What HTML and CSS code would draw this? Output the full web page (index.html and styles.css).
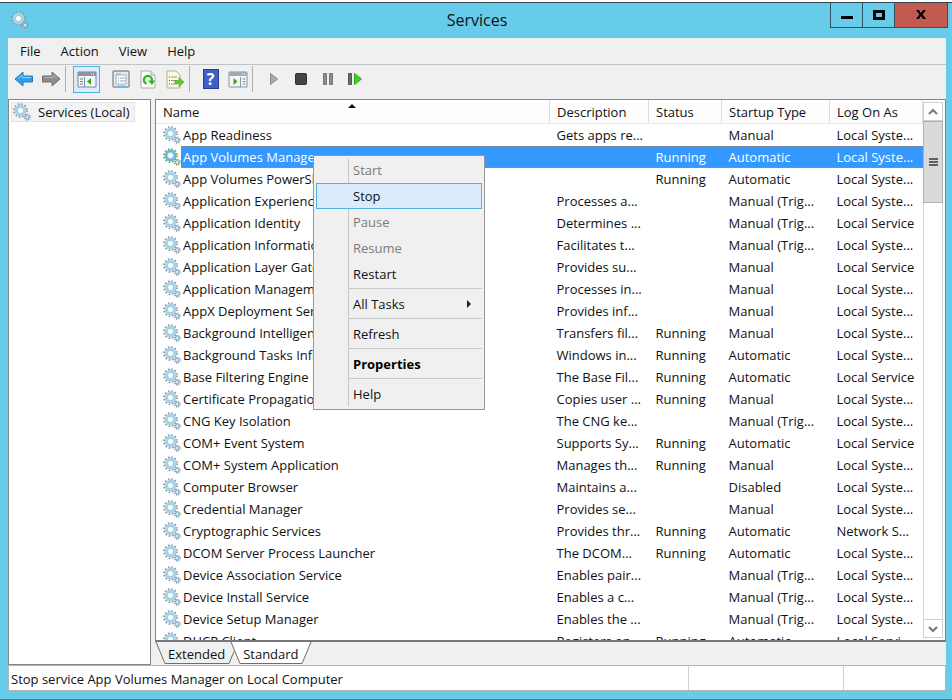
FILE: index.html
```
<!DOCTYPE html>
<html lang="en">
<head>
  <meta charset="UTF-8">
  <meta name="viewport" content="width=device-width, initial-scale=1.0">
  <title>Services</title>
  <link rel="stylesheet" href="styles.css">
</head>
<body>
  <!-- Shared gear icon -->
  <svg class="defs" aria-hidden="true">
    <symbol id="gear" viewBox="0 0 18 18">
      <circle class="teeth" cx="7.5" cy="7.5" r="6.4" fill="none" stroke-width="2" stroke-dasharray="1.5 1.85"/>
      <circle class="wheel" cx="7.5" cy="7.5" r="4.6" fill="#fff" stroke-width="2.6"/>
      <circle cx="7.5" cy="7.5" r="3.1" fill="none" stroke="#8db4c9" stroke-width=".8"/>
      <circle class="teeth" cx="14.2" cy="14.2" r="2.8" fill="none" stroke-width="1.5" stroke-dasharray="1.1 1.1"/>
      <circle cx="14.2" cy="14.2" r="1.7" fill="#e8f3f9" stroke="#8fb6cb" stroke-width="1.2"/>
    </symbol>
  </svg>

  <div class="window">
    <header class="titlebar">
      <svg class="app-icon"><use href="#gear"/></svg>
      <h1>Services</h1>
      <div class="window-buttons">
        <button class="win-btn" aria-label="Minimize"><svg width="14" height="12"><path d="M1 7h12v3H1z"/></svg></button>
        <button class="win-btn" aria-label="Maximize"><svg width="14" height="12"><path fill-rule="evenodd" d="M1 1h12v10H1zM4 4v4h6V4z"/></svg></button>
        <button class="win-btn close" aria-label="Close"><svg width="12" height="12"><path d="M1 1h3l2 3 2-3h3L7.600 5.500 11 10H8L6 7l-2 3H1l3.400-4.500z"/></svg></button>
      </div>
    </header>

    <nav class="menubar">
      <button>File</button>
      <button>Action</button>
      <button>View</button>
      <button>Help</button>
    </nav>

    <div class="toolbar">
      <button aria-label="Back"><svg width="20" height="18"><path d="M1 9l8-7v4h9.500v6H9v4z" fill="#2f9fe8" stroke="#2a78b8"/><path d="M4 8.500l4-3.500v2.500h9" fill="none" stroke="#8fd0f7"/></svg></button>
      <button aria-label="Forward"><svg width="20" height="18"><path d="M19 9l-8-7v4H1.500v6H11v4z" fill="#8c8c8c" stroke="#6e6e6e"/><path d="M3 7.500h9V5l4 3.500" fill="none" stroke="#b5b5b5"/></svg></button>
      <span class="divider"></span>
      <button class="pressed" aria-label="Show or hide console tree"><svg width="20" height="17"><path d="M1 1h18v15H1z" fill="#f4f7f9" stroke="#7c8791"/><path d="M1 1h18v4H1z" fill="#8c96a0"/><path d="M14 3h1M16 3h1" stroke="#fff"/><path d="M7.500 6v10" stroke="#7c8791"/><path d="M3 8h3M3 10.500h3M3 13h3" stroke="#4d7fae"/><path d="M14 7v7l-4-3.500z" fill="#35a81f"/></svg></button>
      <button aria-label="Properties"><svg width="18" height="19"><rect x="1" y="1" width="16" height="16" rx="1" fill="#e6e9ec" stroke="#8a9197" stroke-width="1.400"/><path d="M4 5h10v9H4z" fill="#fff" stroke="#a3b0bb"/><path d="M4 4h5" stroke="#a3b0bb"/><path d="M6 8h1M6 11h1" stroke="#2b9bd8"/><path d="M8 8h5M8 11h5" stroke="#8fa3b3"/><path d="M6 16.500h7" stroke="#50c4ee" stroke-width="2"/></svg></button>
      <button aria-label="Refresh"><svg width="18" height="19"><path d="M2 1h10l4 4v13H2z" fill="#fbfcf8" stroke="#a7adb0"/><path d="M12 1v4h4" fill="#e3e6e8" stroke="#a7adb0"/><path d="M7.500 13.700A4 4 0 1 1 12.800 11" fill="none" stroke="#35b52c" stroke-width="2.400"/><path d="M9 10.500h7L13 15z" fill="#35b52c"/></svg></button>
      <button aria-label="Export list"><svg width="20" height="19"><path d="M2 1h9l4 4v13H2z" fill="#fbf8dd" stroke="#b5ae8e"/><path d="M4 7h1M4 10.500h1M4 14h1" stroke="#555"/><path d="M6 7h6M6 10.500h6M6 14h6" stroke="#9a9a90"/><path d="M10 10.500h4V7.500l5 4.500-5 4.500v-3h-4z" fill="#5ccc2e" stroke="#41a51d" stroke-width=".6"/></svg></button>
      <span class="divider"></span>
      <button aria-label="Help topics" class="help-icon"><b>?</b></button>
      <button aria-label="Show or hide action pane"><svg width="20" height="17"><path d="M1 1h18v15H1z" fill="#f4f7f9" stroke="#8b949c"/><path d="M1 1h18v4H1z" fill="#a2abb2"/><path d="M14 3h1M16 3h1" stroke="#fff"/><path d="M12.500 6v10" stroke="#8b949c"/><path d="M14.500 8h3M14.500 10.500h3M14.500 13h3" stroke="#4d9fd0"/><path d="M5.500 7v7l4-3.500z" fill="#35a81f"/></svg></button>
      <span class="divider"></span>
      <button aria-label="Start service"><svg width="14" height="14"><path d="M3.500 1.500v11l7-5.500z" fill="#aaa" stroke="#888"/></svg></button>
      <button aria-label="Stop service"><svg width="14" height="14"><rect x="1.500" y="1.500" width="11" height="11" rx="1" fill="#454545" stroke="#303030"/></svg></button>
      <button aria-label="Pause service"><svg width="14" height="14"><path d="M2.500 1.500h3v11h-3zM8.500 1.500h3v11h-3z" fill="#8e8e8e" stroke="#777"/></svg></button>
      <button aria-label="Restart service"><svg width="16" height="14"><path d="M1.500 1.500h3v11h-3z" fill="#6c6c6c" stroke="#555"/><path d="M7.500 1.500v11l7-5.500z" fill="#43cf27" stroke="#2fa51a"/></svg></button>
    </div>

    <main class="content">
      <aside class="tree">
        <a href="#services" class="node"><svg class="icon"><use href="#gear"/></svg>Services (Local)</a>
      </aside>

      <section class="pane" id="services">
        <div class="list">
          <div class="table-wrap">
            <table>
              <thead>
                <tr>
                  <th>Name<i class="sort"></i></th>
                  <th class="col-desc">Description</th>
                  <th class="col-status">Status</th>
                  <th class="col-startup">Startup Type</th>
                  <th class="col-logon">Log On As</th>
                </tr>
              </thead>
              <tbody></tbody>
            </table>
          </div>
          <div class="scrollbar">
            <button aria-label="Scroll up"><svg width="12" height="12"><path d="M2 8l4-4 4 4"/></svg></button>
            <div class="track"><div class="thumb"></div></div>
            <button aria-label="Scroll down"><svg width="12" height="12"><path d="M2 4l4 4 4-4"/></svg></button>
          </div>
        </div>
        <div class="tabs">
          <svg class="tab-shape" width="160" height="23">
            <path d="M1 0l9 21.500h64l5-12" fill="#f0f0f0" stroke="#6e6e6e"/>
            <path d="M76 0l9 21.500h62L156 0z" fill="#fff"/>
            <path d="M76 0l9 21.500h62L156 0" fill="none" stroke="#6e6e6e"/>
          </svg>
          <button class="tab">Extended</button>
          <button class="tab">Standard</button>
        </div>
      </section>
    </main>

    <footer class="statusbar">
      <span class="message">Stop service App Volumes Manager on Local Computer</span>
      <span class="cell"></span>
      <span class="cell small"></span>
    </footer>
  </div>

  <!-- Context menu of the selected service -->
  <div class="context-menu" role="menu">
    <button role="menuitem" disabled>Start</button>
    <button role="menuitem" class="hover">Stop</button>
    <button role="menuitem" disabled>Pause</button>
    <button role="menuitem" disabled>Resume</button>
    <button role="menuitem">Restart</button>
    <hr>
    <button role="menuitem" class="submenu">All Tasks</button>
    <hr>
    <button role="menuitem">Refresh</button>
    <hr>
    <button role="menuitem" class="default">Properties</button>
    <hr>
    <button role="menuitem">Help</button>
  </div>

  <script>
    const services = [
      ["App Readiness", "Gets apps re...", "", "Manual", "Local Syste..."],
      ["App Volumes Manager", "", "Running", "Automatic", "Local Syste..."],
      ["App Volumes PowerShell", "", "Running", "Automatic", "Local Syste..."],
      ["Application Experience", "Processes a...", "", "Manual (Trig...", "Local Syste..."],
      ["Application Identity", "Determines ...", "", "Manual (Trig...", "Local Service"],
      ["Application Information", "Facilitates t...", "", "Manual (Trig...", "Local Syste..."],
      ["Application Layer Gateway", "Provides su...", "", "Manual", "Local Service"],
      ["Application Management", "Processes in...", "", "Manual", "Local Syste..."],
      ["AppX Deployment Service", "Provides inf...", "", "Manual", "Local Syste..."],
      ["Background Intelligent", "Transfers fil...", "Running", "Manual", "Local Syste..."],
      ["Background Tasks Infra", "Windows in...", "Running", "Automatic", "Local Syste..."],
      ["Base Filtering Engine", "The Base Fil...", "Running", "Automatic", "Local Service"],
      ["Certificate Propagation", "Copies user ...", "Running", "Manual", "Local Syste..."],
      ["CNG Key Isolation", "The CNG ke...", "", "Manual (Trig...", "Local Syste..."],
      ["COM+ Event System", "Supports Sy...", "Running", "Automatic", "Local Service"],
      ["COM+ System Application", "Manages th...", "Running", "Manual", "Local Syste..."],
      ["Computer Browser", "Maintains a...", "", "Disabled", "Local Syste..."],
      ["Credential Manager", "Provides se...", "", "Manual", "Local Syste..."],
      ["Cryptographic Services", "Provides thr...", "Running", "Automatic", "Network S..."],
      ["DCOM Server Process Launcher", "The DCOM...", "Running", "Automatic", "Local Syste..."],
      ["Device Association Service", "Enables pair...", "", "Manual (Trig...", "Local Syste..."],
      ["Device Install Service", "Enables a c...", "", "Manual (Trig...", "Local Syste..."],
      ["Device Setup Manager", "Enables the ...", "", "Manual (Trig...", "Local Syste..."],
      ["DHCP Client", "Registers an...", "Running", "Automatic", "Local Servi..."]
    ];
    const selected = "App Volumes Manager";

    document.querySelector("tbody").innerHTML = services.map(([name, ...cells]) => `
      <tr class="${name === selected ? "selected" : ""}">
        <td><svg class="icon"><use href="#gear"/></svg><span class="name">${name}</span></td>
        ${cells.map((cell) => `<td>${cell}</td>`).join("")}
      </tr>`).join("");
  </script>
</body>
</html>
```
FILE: styles.css
```
* {
  box-sizing: border-box;
}

body {
  margin: 0;
  height: 100vh;
  overflow: hidden;
  position: relative;
  font-family: "Open Sans", "Noto Sans", sans-serif;
  font-size: 13px;
  line-height: 20px;
  color: #111;
}

button {
  font: inherit;
  color: inherit;
  background: none;
  border: none;
  padding: 0;
}

svg {
  display: block;
}

.defs {
  position: absolute;
  width: 0;
  height: 0;
}

.icon {
  width: 18px;
  height: 18px;
  flex: none;
}

.teeth {
  stroke: var(--teeth, #8199a8);
}

.wheel {
  stroke: var(--wheel, #a9d3e8);
}

/* Window frame */
.window {
  display: flex;
  flex-direction: column;
  margin-top: 2px;
  height: calc(100vh - 2px);
  padding: 0 6px 8px 8px;
  background: #67cbea;
  border-top: 1px solid #33444c;
  border-bottom: 1px solid #4b8296;
}

.titlebar {
  flex: none;
  height: 35px;
  display: grid;
  grid-template-columns: 1fr auto 1fr;
  align-items: start;
}

.app-icon {
  width: 18px;
  height: 18px;
  margin: 8px 0 0 3px;
}

.titlebar h1 {
  margin: 5px 0 0;
  font-size: 16px;
  font-weight: normal;
  line-height: 24px;
}

.window-buttons {
  display: flex;
  justify-content: flex-end;
  margin-right: -2px;
}

.win-btn {
  width: 33px;
  height: 25px;
  margin-left: -1px;
  display: flex;
  align-items: center;
  justify-content: center;
  border: 1px solid #2d5361;
  border-top: none;
}

.win-btn.close {
  width: 54px;
  background: #c25a50;
}

/* Menu bar */
.menubar {
  flex: none;
  height: 26px;
  display: flex;
  gap: 20px;
  padding-left: 12px;
  background: #f0f0f0;
}

/* Toolbar */
.toolbar {
  flex: none;
  height: 35px;
  display: flex;
  align-items: center;
  background: #f0f0f0;
  border-top: 1px solid #bfc3c6;
  padding: 0 0 6px 2px;
}

.toolbar button {
  width: 27px;
  height: 27px;
  display: flex;
  align-items: center;
  justify-content: center;
}

.divider {
  width: 1px;
  height: 26px;
  margin: 0 7px 0 1px;
  background: #b0b0b0;
}

.toolbar .pressed {
  margin-right: 7px;
  background: #dbeafc;
  border: 1px solid #4fb2e6;
}

.help-icon b {
  width: 16px;
  height: 20px;
  background: #3c5fc9;
  border: 1px solid #2a408f;
  color: #fff;
  font-size: 16px;
  line-height: 18px;
}

/* Content */
.content {
  flex: 1;
  min-height: 0;
  display: flex;
  gap: 4px;
  background: #f0f0f0;
}

.tree {
  width: 143px;
  padding: 2px;
  background: #fff;
  border: 1px solid #82878f;
}

.node {
  display: inline-flex;
  align-items: center;
  gap: 7px;
  height: 20px;
  padding: 0 4px 0 1px;
  background: #f3f3f3;
  border: 1px solid #e2e2e2;
  color: inherit;
  text-decoration: none;
  white-space: nowrap;
}

.pane {
  flex: 1;
  min-width: 0;
  display: flex;
  flex-direction: column;
}

.list {
  flex: 1;
  min-height: 0;
  display: flex;
  background: #fff;
  border: 1px solid #82878f;
  border-bottom: 2px solid #75787c;
}

.table-wrap {
  flex: 1;
  overflow: hidden;
}

table {
  width: 100%;
  table-layout: fixed;
  border-collapse: collapse;
}

th {
  height: 23px;
  padding: 2px 0 0 7px;
  font-weight: normal;
  text-align: left;
  border-right: 1px solid #dcdcdc;
  border-bottom: 1px solid #e8e8e8;
  background: #fdfdfd;
  position: relative;
}

.col-desc {
  width: 99px;
}

.col-status {
  width: 73px;
}

.col-startup {
  width: 108px;
}

.col-logon {
  width: 93px;
}

.sort {
  position: absolute;
  top: 4px;
  left: calc(50% - 5px);
  border: 4px solid transparent;
  border-top: none;
  border-bottom-color: #111;
}

td {
  height: 22px;
  padding: 0 0 0 7px;
  white-space: nowrap;
}

td:first-child {
  display: flex;
  align-items: center;
}

.name {
  flex: 1;
  padding-left: 2px;
  line-height: 22px;
}

.selected {
  --teeth: #7aa51c;
  --wheel: #62b8e8;
}

.selected .name,
.selected td:not(:first-child) {
  background: #3399ff;
  box-shadow: inset 0 1px #7d8fa5, inset 0 -1px #7d8fa5;
  color: #fff;
}

/* Scrollbar */
.scrollbar {
  width: 20px;
  margin-right: 2px;
  display: flex;
  flex-direction: column;
  padding: 2px 0;
}

.scrollbar button {
  height: 19px;
  display: flex;
  align-items: center;
  justify-content: center;
  border: 1px solid #cfcfcf;
}

.scrollbar path {
  fill: none;
  stroke: #777;
  stroke-width: 2;
}

.track {
  flex: 1;
  border: 1px solid #d5d5d5;
  border-width: 0 1px;
}

.thumb {
  height: 82px;
  margin: 0 -1px;
  display: flex;
  align-items: center;
  justify-content: center;
  background: #dadada;
  border: 1px solid #b0b0b0;
}

.thumb::before {
  content: "";
  width: 9px;
  height: 8px;
  background: repeating-linear-gradient(#606060 0 2px, transparent 2px 3px);
}

/* Tabs */
.tabs {
  flex: none;
  height: 23px;
  display: flex;
  position: relative;
  gap: 18px;
  padding-left: 13px;
}

.tab-shape {
  position: absolute;
  top: 0;
  left: 0;
}

.tab {
  position: relative;
  line-height: 20px;
}

/* Status bar */
.statusbar {
  flex: none;
  height: 26px;
  display: flex;
  background: #fff;
  border: 1px solid #b5b5b5;
}

.message {
  flex: 1;
  padding: 3px 2px;
}

.cell {
  width: 155px;
  border-left: 1px solid #d0d0d0;
}

.cell.small {
  width: 102px;
}

/* Context menu */
.context-menu {
  position: absolute;
  top: 155px;
  left: 313px;
  width: 172px;
  padding: 1px 2px 2px;
  display: flex;
  flex-direction: column;
  background: linear-gradient(#c8c8c8, #c8c8c8) 34px 3px / 1px calc(100% - 6px) no-repeat #f0f0f0;
  border: 1px solid #979797;
}

.context-menu button {
  height: 26px;
  padding-left: 36px;
  text-align: left;
  border: 1px solid transparent;
}

.context-menu button:disabled {
  color: #7b7b7b;
}

.context-menu .hover {
  background: #dbeafd;
  border-color: #4fb2e6;
}

.context-menu .default {
  font-weight: bold;
  color: #000;
}

.context-menu .submenu {
  display: flex;
  align-items: center;
  justify-content: space-between;
  padding-right: 10px;
}

.submenu::after {
  content: "";
  border: 4px solid transparent;
  border-left-color: #222;
  border-right: none;
}

.context-menu hr {
  width: 133px;
  height: 1px;
  margin: 1px 0 2px 33px;
  border: none;
  background: #c8c8c8;
}
```
